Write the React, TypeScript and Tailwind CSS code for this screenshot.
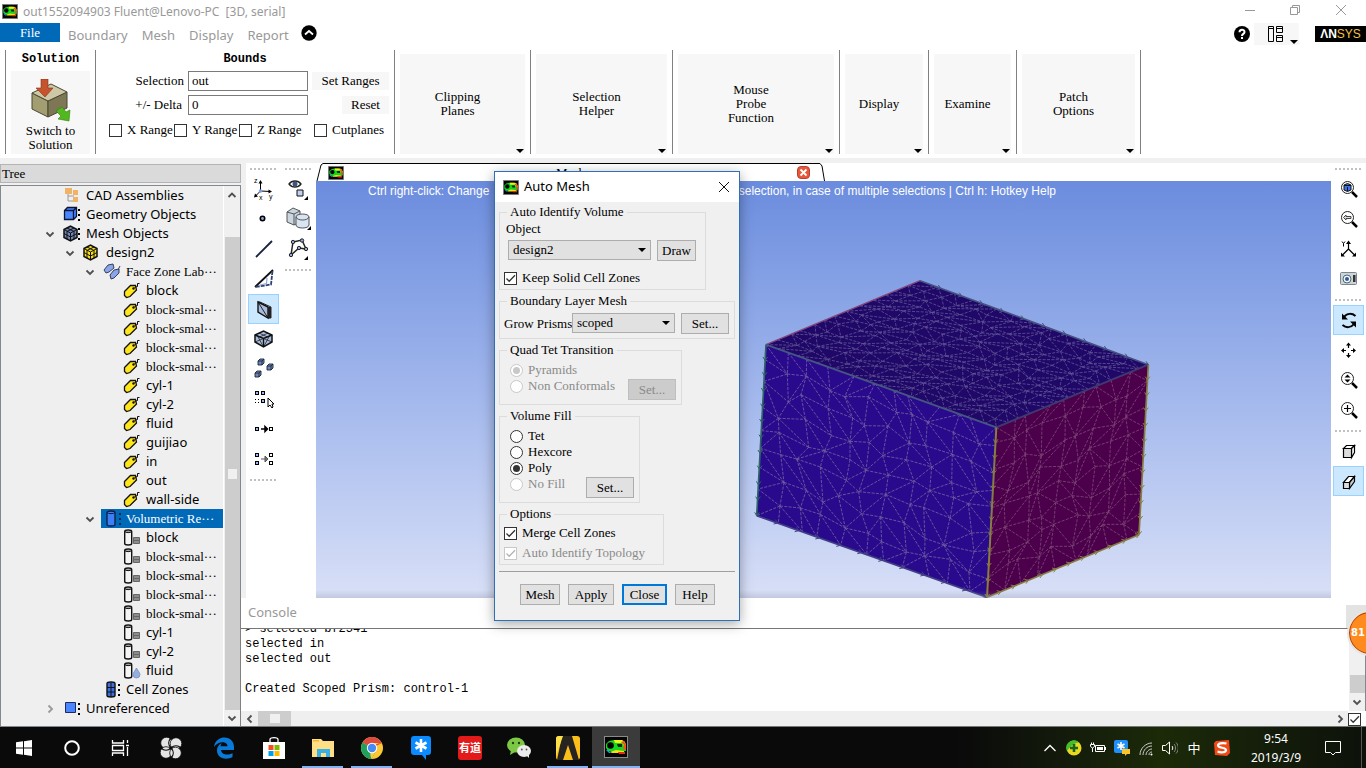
import React from 'react';

type Point = [number, number];

const sans = "font-['Noto_Sans','Open_Sans',sans-serif] text-[13px]";

/* ---------- Small shared pieces ---------- */

function FluentIcon({ className = 'w-4 h-4' }: { className?: string }) {
  return (
    <svg viewBox="0 0 24 22" preserveAspectRatio="none" className={className} aria-hidden="true">
      <rect x="0.5" y="0.5" width="23" height="21" fill="#050505" stroke="#8a8a8a" />
      <path d="M2 8l3-3 5-1h5l5 1 2 4v6l-7 1H9l-5-1-2-3z" fill="#12d822" />
      <path d="M10 4h8l3 2 1 4h-2l-2-3h-7z" fill="#f8f010" />
      <path d="M17 6l3-1 2 4v5l-3-1 1-4z" fill="#f4501a" />
      <path d="M6 16l6-2 8 1v2H8z" fill="#f8e010" />
      <path d="M14 16h7v2h-6z" fill="#ee2a10" />
      <path d="M2 14h2l3 3H5z" fill="#18a0e8" />
      <circle cx="6.500" cy="9.500" r="3.300" fill="#000" />
      <path d="M13 8h5v3h-4z" fill="#0a2a08" />
    </svg>
  );
}

function DownArrow({ className = '' }: { className?: string }) {
  return (
    <svg viewBox="0 0 8 4" className={`w-2 h-1 ${className}`} aria-hidden="true">
      <path d="M0 0h8L4 4z" fill="#000" />
    </svg>
  );
}

function Chevron({ dir, color = '#505050' }: { dir: 'up' | 'down' | 'left' | 'right'; color?: string }) {
  const paths = {
    up: 'M1.500 7L5 3.500 8.500 7',
    down: 'M1.500 3.500L5 7l3.500-3.500',
    left: 'M6.500 1.500L3 5l3.500 3.500',
    right: 'M3.500 1.500L7 5 3.500 8.500',
  };
  return (
    <svg viewBox="0 0 10 10" className="w-2.5 h-2.5 shrink-0" fill="none" stroke={color} strokeWidth="1.8" aria-hidden="true">
      <path d={paths[dir]} />
    </svg>
  );
}

function Check({ label, checked, disabled }: { label: string; checked?: boolean; disabled?: boolean }) {
  return (
    <label className={`flex items-center gap-[5px] h-[14px] whitespace-nowrap ${disabled ? 'text-[#8a8a8a]' : 'text-black'}`}>
      <span className="relative w-[13px] h-[13px] shrink-0">
        <input
          type="checkbox"
          defaultChecked={checked}
          disabled={disabled}
          aria-label={label || 'Show console'}
          className="peer block appearance-none w-[13px] h-[13px] bg-white border border-[#333] disabled:border-[#c8c8c8]"
        />
        <svg viewBox="0 0 13 13" className="absolute inset-0 hidden peer-checked:block pointer-events-none" fill="none" stroke={disabled ? '#b4b4b4' : '#333'} strokeWidth="1.3">
          <path d="M2.500 6.500L5.200 9.200 11 3.200" />
        </svg>
      </span>
      {label}
    </label>
  );
}

function Radio({ name, label, checked, disabled }: { name: string; label: string; checked?: boolean; disabled?: boolean }) {
  return (
    <label className={`flex items-center gap-[5px] h-4 whitespace-nowrap ${disabled ? 'text-[#8a8a8a]' : 'text-black'}`}>
      <span className="relative w-[13px] h-[13px]">
        <input
          type="radio"
          name={name}
          defaultChecked={checked}
          disabled={disabled}
          className="peer block appearance-none w-[13px] h-[13px] rounded-full bg-white border border-[#333] disabled:border-[#c8c8c8]"
        />
        <span className="absolute left-[3px] top-[3px] w-[7px] h-[7px] rounded-full bg-[#333] hidden peer-checked:block peer-disabled:bg-[#c8c8c8]" />
      </span>
      {label}
    </label>
  );
}

function PushButton({ children, className = '', disabled }: { children: React.ReactNode; className?: string; disabled?: boolean }) {
  return (
    <button
      disabled={disabled}
      className={`h-[21px] border text-center ${disabled ? 'bg-[#ccc] border-[#bfbfbf] text-[#8a8a8a]' : 'bg-[#e1e1e1]'} ${className}`}
    >
      {children}
    </button>
  );
}

function Select({ label, value, className }: { label: string; value: string; className: string }) {
  return (
    <span className={`relative h-5 ${className}`}>
      <select aria-label={label} className="appearance-none w-full h-5 bg-[#e1e1e1] border border-[#adadad] pl-1 leading-[14px]">
        <option>{value}</option>
      </select>
      <DownArrow className="absolute right-[5px] top-2 pointer-events-none" />
    </span>
  );
}

function Dots() {
  return (
    <div className="h-[11px] flex items-center justify-center gap-px" aria-hidden="true">
      {[0, 1, 2, 3, 4, 5, 6].map((i) => (
        <span key={i} className="w-[3px] h-0.5 bg-[#c0c0c0] border-r border-white" />
      ))}
    </div>
  );
}

/* ---------- Title bar, menu and ribbon ---------- */

function TitleBar() {
  return (
    <header className="flex items-center h-[23px] pl-0.5 pr-[19px] bg-white">
      <FluentIcon className="w-4 h-[15px]" />
      <h1 className="font-['Noto_Sans','Open_Sans',sans-serif] text-[12px] ml-[5px] text-[#999] whitespace-pre">out1552094903 Fluent@Lenovo-PC  [3D, serial]</h1>
      <div className="ml-auto flex items-center gap-[34px] pb-[3px]">
        <button aria-label="Minimize" className="w-[10px]">
          <svg viewBox="0 0 10 10" className="w-[10px]" stroke="#999" fill="none"><path d="M0 5.500h10" /></svg>
        </button>
        <button aria-label="Restore" className="w-3">
          <svg viewBox="0 0 12 12" className="w-3" stroke="#999" fill="none"><path d="M1.500 3.500h7v7h-7zM3.500 3.500v-2h7v7h-2" /></svg>
        </button>
        <button aria-label="Close window" className="w-3">
          <svg viewBox="0 0 12 12" className="w-3" stroke="#999" fill="none"><path d="M1 1l10 10M11 1L1 11" /></svg>
        </button>
      </div>
    </header>
  );
}

function MenuBar() {
  return (
    <nav className="flex items-start h-[27px] bg-white">
      <button className="w-[60px] h-[19px] bg-[#0069b8] text-white">File</button>
      <div className={`${sans} flex items-center h-[24px] ml-2 gap-[14px] text-[#999]`}>
        {['Boundary', 'Mesh', 'Display', 'Report'].map((item) => (
          <button key={item}>{item}</button>
        ))}
      </div>
      <button aria-label="Collapse ribbon" className="ml-3 mt-0.5">
        <svg viewBox="0 0 16 16" className="w-4 h-4">
          <circle cx="8" cy="8" r="7.700" fill="#000" />
          <path d="M4 9.500L8 6l4 3.500" fill="none" stroke="#fff" strokeWidth="1.800" />
        </svg>
      </button>
      <div className="ml-auto flex items-center">
        <button aria-label="Help">
          <svg viewBox="0 0 16 16" className="w-4 h-4">
            <circle cx="8" cy="8" r="8" fill="#000" />
            <path d="M5.500 6.300C5.500 3 10.500 3 10.500 6c0 2-2.500 1.800-2.500 4M8 11v2" fill="none" stroke="#fff" strokeWidth="2" />
          </svg>
        </button>
        <button aria-label="Arrange layout" className="flex items-end w-[45px] h-[22px] ml-1 bg-[#f7f7f7] pl-[14px] pb-[3px]">
          <svg viewBox="0 0 16 16" className="w-4 h-4" fill="none" stroke="#000">
            <path d="M.5.5h5v15h-5zM.5 2.500h5M8.500.5h6v6h-6zM8.500 2.500h6M8.500 9.500h6v6h-6zM8.500 11.500h6" />
          </svg>
          <DownArrow className="ml-1.5 -mb-0.5" />
        </button>
        <div className="w-[51px] h-4 ml-4 bg-black text-white font-bold font-['Liberation_Sans',sans-serif] text-[12px] leading-4 text-center">
          ΛN<span className="font-normal text-[#f5c242]">SYS</span>
        </div>
      </div>
    </nav>
  );
}

function SolutionIcon() {
  return (
    <svg viewBox="0 0 40 44" className="w-10 h-11" aria-hidden="true">
      <path d="M1 14L17 22v16L1 30z" fill="#a39d72" stroke="#4a4632" />
      <path d="M17 22l19-9v16l-19 9z" fill="#7d7755" stroke="#4a4632" />
      <path d="M1 14L20 5l16 8-19 9z" fill="#cdc8a6" stroke="#4a4632" />
      <path d="M10 0h7v9h5l-8 9-9-9h5z" fill="#c4532e" stroke="#8d2f14" strokeWidth=".6" />
      <path d="M25 32l6-4 4 5 4-2-1 11-11-2 3-3z" fill="#52b820" stroke="#2f7d0c" strokeWidth=".6" />
    </svg>
  );
}

const ribbonMenus = [
  { lines: ['Clipping', 'Planes'], width: 'w-[136px]' },
  { lines: ['Selection', 'Helper'], width: 'w-[142px]' },
  { lines: ['Mouse', 'Probe', 'Function'], width: 'w-[167px]' },
  { lines: ['Display'], width: 'w-[89px]' },
  { lines: ['Examine'], width: 'w-[88px]' },
  { lines: ['Patch', 'Options'], width: 'w-[125px] border-r' },
];

function Ribbon() {
  const title = "font-['Liberation_Mono',monospace] font-bold text-[12px] text-center h-[18px] leading-[18px]";
  return (
    <div className="flex items-stretch h-[108px] pb-1 pl-[5px] bg-white">
      <section className="w-[90px] border-l border-[#808080] px-[5px] flex flex-col">
        <h2 className={title}>Solution</h2>
        <button className="mt-[3px] flex-1 bg-[#f7f7f7] flex flex-col items-center pt-2">
          <SolutionIcon />
          <span className="mt-px">Switch to<br />Solution</span>
        </button>
      </section>

      <section className="w-[299px] border-l border-[#808080] pl-[13px] pr-[5px]">
        <h2 className={`${title} pr-2`}>Bounds</h2>
        <div className="grid grid-cols-[77px_120px_1fr] gap-x-0.5 gap-y-1 mt-[3px] items-center">
          <label htmlFor="selection" className="text-right pr-0.5">Selection</label>
          <input id="selection" defaultValue="out" className="w-full h-5 border border-[#7a7a7a] px-[3px]" />
          <button className="justify-self-end w-[77px] h-[18px] bg-[#f7f7f7]">Set Ranges</button>
          <label htmlFor="delta" className="text-right pr-1">+/- Delta</label>
          <input id="delta" defaultValue="0" className="w-full h-5 border border-[#7a7a7a] px-[3px]" />
          <button className="justify-self-end w-[47px] h-[18px] bg-[#f7f7f7]">Reset</button>
        </div>
        <div className="grid grid-cols-[65px_65px_75px_1fr] mt-2">
          <Check label="X Range" />
          <Check label="Y Range" />
          <Check label="Z Range" />
          <Check label="Cutplanes" />
        </div>
      </section>

      {ribbonMenus.map((menu) => (
        <section key={menu.lines[0]} className={`${menu.width} border-l border-[#808080] pt-1 px-[5px]`}>
          <button className="relative w-full h-full bg-[#f7f7f7] pr-[10px]">
            {menu.lines.map((line) => (
              <span key={line} className="block">{line}</span>
            ))}
            <DownArrow className="absolute right-px bottom-px" />
          </button>
        </section>
      ))}
    </div>
  );
}

/* ---------- Outline tree ---------- */

type IconKind = 'cad' | 'geometry' | 'mesh' | 'design' | 'labels' | 'tag' | 'regions' | 'solid' | 'liquid' | 'cells' | 'unref';

function TreeIcon({ kind }: { kind: IconKind }) {
  const colon = <path d="M16 4h2v2h-2zM16 9h2v2h-2zM16 14h2v2h-2z" fill="#000" />;
  const hex = (fill: string) => (
    <g fill={fill} stroke="#111">
      <path d="M2 5.500L8.500 2 15 5.500v8L8.500 17 2 13.500z" strokeWidth="1.500" />
      <path d="M2 5.500L8.500 9 15 5.500M8.500 9v8M5 7.200v8M12 7.200v8M2 9.500l6.500 3.500L15 9.500M5 4l7 3.500M12 4L5 7.500" fill="none" />
    </g>
  );
  return (
    <svg viewBox="0 0 20 19" className="w-5 h-[19px] shrink-0" aria-hidden="true">
      {kind === 'cad' && (
        <>
          <path d="M6 7v8h6M6 10h6" fill="none" stroke="#999" />
          <path d="M3 2h7v6H3zM11 4h5v5h-5zM11 11h5v5h-5z" fill="#f0b264" />
        </>
      )}
      {kind === 'geometry' && (
        <>
          <path d="M2.500 5.500l3-3h9v9l-3 3h-9zM2.500 5.500h9v9M11.500 5.500l3-3" fill="#4a86ff" stroke="#0b1430" strokeWidth="1.300" />
          {colon}
        </>
      )}
      {kind === 'mesh' && <>{hex('#7186b5')}{colon}</>}
      {kind === 'design' && hex('#f7dd1c')}
      {kind === 'labels' && (
        <g fill="#8aa6e8" stroke="#35405e">
          <path d="M2 8l4-5 5-1 1 4-5 4-3 1z" />
          <path d="M8 13l4-5 5-1v4l-5 5-3 1z" />
          <path d="M16 8l2-4" fill="none" />
        </g>
      )}
      {kind === 'tag' && (
        <>
          <path d="M2.500 10.500L8.500 4.500l5 0 1 4.500L8 15.500 4.500 16.500l-2-2z" fill="#ffe61c" stroke="#111" strokeWidth="1.300" />
          <circle cx="11.500" cy="7.500" r="1.200" fill="#111" />
          <path d="M12.500 6.500l3-1V2.500h2" fill="none" stroke="#111" />
        </>
      )}
      {kind === 'regions' && (
        <>
          <path d="M5 3.500c0-2 8-2 8 0v12c0 2-8 2-8 0z" fill="#3d80f5" stroke="#0a1c44" strokeWidth="1.300" />
          <path d="M5 3.500c1 1.500 7 1.500 8 0" fill="none" stroke="#0a1c44" />
          <path d="M17 4h2v2h-2zM17 9h2v2h-2zM17 14h2v2h-2z" fill="#072a52" />
        </>
      )}
      {(kind === 'solid' || kind === 'liquid') && (
        <>
          <path d="M2.700 3.500c0-2 7-2 7 0v12c0 2-7 2-7 0z" fill="#f4f4f4" stroke="#111" strokeWidth="1.400" />
          <path d="M2.700 3.500c1 1.500 6 1.500 7 0" fill="#555" stroke="#111" />
        </>
      )}
      {kind === 'solid' && <path d="M11.500 9.500h6v6h-6zM11.500 12.500h6" fill="#8c8c8c" stroke="#666" />}
      {kind === 'liquid' && <path d="M14.500 7c2 3.500 3.500 5 3.500 6.500a3.500 3.500 0 01-7 0C11 12 12.500 10.500 14.500 7z" fill="#94aede" stroke="#7188bd" strokeWidth=".7" />}
      {kind === 'cells' && (
        <>
          <path d="M5 3.500c0-2 8-2 8 0v12c0 2-8 2-8 0z" fill="#3c70e0" stroke="#111" strokeWidth="1.400" />
          <path d="M9 3v14M5 7.500h8M5 12h8" stroke="#111" />
          {colon}
        </>
      )}
      {kind === 'unref' && (
        <>
          <path d="M3.500 3.500h10v10h-10z" fill="#4a86ff" stroke="#1c2c60" />
          {colon}
        </>
      )}
    </svg>
  );
}

interface TreeRow {
  label: string;
  depth: number;
  icon: IconKind;
  arrow?: 'down' | 'right';
  wide?: boolean;
  selected?: boolean;
}

const small = (icon: IconKind): TreeRow => ({ label: 'block-smal···', depth: 3, icon, wide: true });

const treeRows: TreeRow[] = [
  { label: 'CAD Assemblies', depth: 0, icon: 'cad' },
  { label: 'Geometry Objects', depth: 0, icon: 'geometry' },
  { label: 'Mesh Objects', depth: 0, icon: 'mesh', arrow: 'down' },
  { label: 'design2', depth: 1, icon: 'design', arrow: 'down' },
  { label: 'Face Zone Lab···', depth: 2, icon: 'labels', arrow: 'down', wide: true },
  { label: 'block', depth: 3, icon: 'tag' },
  small('tag'),
  small('tag'),
  small('tag'),
  small('tag'),
  { label: 'cyl-1', depth: 3, icon: 'tag' },
  { label: 'cyl-2', depth: 3, icon: 'tag' },
  { label: 'fluid', depth: 3, icon: 'tag' },
  { label: 'guijiao', depth: 3, icon: 'tag' },
  { label: 'in', depth: 3, icon: 'tag' },
  { label: 'out', depth: 3, icon: 'tag' },
  { label: 'wall-side', depth: 3, icon: 'tag' },
  { label: 'Volumetric Re···', depth: 2, icon: 'regions', arrow: 'down', wide: true, selected: true },
  { label: 'block', depth: 3, icon: 'solid' },
  small('solid'),
  small('solid'),
  small('solid'),
  small('solid'),
  { label: 'cyl-1', depth: 3, icon: 'solid' },
  { label: 'cyl-2', depth: 3, icon: 'solid' },
  { label: 'fluid', depth: 3, icon: 'liquid' },
  { label: 'Cell Zones', depth: 2, icon: 'cells' },
  { label: 'Unreferenced', depth: 0, icon: 'unref', arrow: 'right' },
];

const indents = ['pl-[41px]', 'pl-[61px]', 'pl-[81px]', 'pl-[101px]'];

function TreePanel() {
  return (
    <aside className="w-[241px] shrink-0 flex flex-col bg-[#f0f0f0] pt-px">
      <h2 className="h-[19px] bg-[#dadada] border border-[#b4b4b4] leading-[18px] pl-px">Tree</h2>
      <div className="flex-1 mt-0.5 flex border border-[#828790] bg-[#efefef]">
        <ul className="flex-1">
          {treeRows.map((row, i) => (
            <li key={i} className={`flex items-center h-[19px] ${indents[row.depth]}`}>
              <span className="w-4 mr-[3px] flex justify-center">
                {row.arrow && <Chevron dir={row.arrow} color={row.arrow === 'right' ? '#999' : '#505050'} />}
              </span>
              <span className={`flex-1 flex items-center gap-1 pl-px h-[19px] whitespace-nowrap ${row.selected ? 'bg-[#0069b8] text-white' : ''}`}>
                <TreeIcon kind={row.icon} />
                <span className={row.wide ? 'pt-px' : `${sans} pb-0.5`}>{row.label}</span>
              </span>
            </li>
          ))}
        </ul>
        <div className="w-[17px] flex flex-col items-center border-l border-white bg-[#f0f0f0]">
          <span className="h-[51px] pt-1"><Chevron dir="up" /></span>
          <span className="flex-1 w-[15px] bg-[#cdcdcd] flex items-center justify-center">
            <span className="w-[9px] h-[10px] bg-[#f0f0f0]" />
          </span>
          <span className="h-4 pt-[3px]"><Chevron dir="down" /></span>
        </div>
      </div>
    </aside>
  );
}

/* ---------- Tool strips ---------- */

interface Tool {
  name: string;
  art: React.ReactNode;
  active?: boolean;
}

const corner = <path d="M20 21v-4l-4 4z" fill="#000" />;
const miniCube = (x: number, y: number) => (
  <g transform={`translate(${x} ${y})`} stroke="#1c2436" strokeWidth=".9">
    <path d="M0 2l2-2h4v4L4 6H0z" fill="#6f86b8" />
    <path d="M0 2h4v4M4 2l2-2" fill="none" />
  </g>
);
const square = (x: number, y: number, fill = '#9db8f2') => <rect x={x} y={y} width="3" height="3" fill={fill} stroke="#000" />;
const lens = (
  <>
    <circle cx="9.500" cy="8.500" r="6" fill="#fff" stroke="#222" />
    <path d="M14 13l5 5" stroke="#000" strokeWidth="2.500" />
  </>
);

const pickTools: Tool[] = [
  {
    name: 'Axes',
    art: (
      <>
        <path d="M7.500 3v9l10 .5M7.500 12l-5 5" fill="none" stroke="#000" />
        <path d="M7.500 1L5.500 4.500h4zM19 12.500l-3.500-2v4zM1 18.500l1-4 3 3z" />
        <text x="1" y="4" fontSize="7" fontFamily="Liberation Sans">z</text>
        <text x="16" y="20" fontSize="7" fontFamily="Liberation Sans">y</text>
        <text x="6" y="21" fontSize="7" fontFamily="Liberation Sans">x</text>
        <circle cx="7.500" cy="12" r="1.800" fill="#7f9be0" />
      </>
    ),
  },
  { name: 'Select node', art: <circle cx="9.500" cy="9.500" r="2.200" fill="#8fa9dd" stroke="#000" strokeWidth="1.600" /> },
  { name: 'Select edge', art: <path d="M3 18L19 2" stroke="#18223c" strokeWidth="1.800" /> },
  {
    name: 'Select face',
    art: (
      <>
        <path d="M2 18L20 1" stroke="#111" strokeWidth="1.800" />
        <path d="M19.500 2l-1.500 13.500L2 18" fill="none" stroke="#2e4270" strokeWidth="1.800" strokeDasharray="4 1" />
        <path d="M14 9l-.5 5.500L7 16" fill="none" stroke="#8fa9dd" strokeWidth="1.200" />
      </>
    ),
  },
  {
    name: 'Select zone',
    active: true,
    art: (
      <>
        <path d="M5 3l10 5v11L5 13z" fill="#a9bbdc" stroke="#111" strokeWidth="1.400" />
        <path d="M5 3l10 16M5 3h2l11 5v11l-3 0" fill="none" stroke="#111" strokeWidth=".9" />
        <path d="M15 8l3 0v11h-3z" fill="#222" />
      </>
    ),
  },
  {
    name: 'Select object',
    art: (
      <>
        <path d="M2 6l8.500-4L19 6v7l-8.500 5L2 13z" fill="#a9bbdc" stroke="#111" strokeWidth="1.500" />
        <path d="M2 6l8.500 3.500L19 6M10.500 9.500V18" fill="none" stroke="#111" strokeWidth="1.400" />
        <path d="M2 13l8.500-3.500L19 13M6 4l8.500 4M15 4L6.500 8M4 6l6.500 12M17 6l-6.500 12" fill="none" stroke="#111" strokeWidth=".7" />
      </>
    ),
  },
  { name: 'Select bodies', art: <>{miniCube(5, 0)}{miniCube(14, 5)}{miniCube(2, 12)}</> },
  {
    name: 'Box select',
    art: (
      <>
        {square(2.500, 2.500)}
        {square(8.500, 2.500)}
        {square(8.500, 10.500)}
        <path d="M2 10h1v1H2zM5 10h1v1H5zM2 13h1v1H2zM5 13h1v1H5z" />
        <path d="M15 9v9l2-2 2 3 1-1-1-3h2z" fill="#fff" stroke="#000" />
      </>
    ),
  },
  {
    name: 'Extend selection',
    art: (
      <>
        {square(2.500, 8.500)}
        <path d="M8 10h4M12 7.500L14.500 10 12 12.500z" fill="#000" stroke="#000" strokeWidth="1.500" />
        {square(16.500, 8.500, '#fff')}
      </>
    ),
  },
  {
    name: 'Convert selection',
    art: (
      <>
        {square(2.500, 4.500)}
        {square(2.500, 12.500)}
        <path d="M8 10h4M12 7l3 3-3 3z" fill="#777" stroke="#555" />
        {square(16.500, 4.500, '#fff')}
        {square(16.500, 12.500, '#fff')}
      </>
    ),
  },
];

const showTools: Tool[] = [
  {
    name: 'Visibility',
    art: (
      <>
        <path d="M1 5c3-4 9-4 12 0-3 4-9 4-12 0z" fill="#fff" stroke="#222" strokeWidth="1.300" />
        <circle cx="7" cy="5" r="2.500" fill="#3c5578" />
        <path d="M9 11h6v6H9z" fill="#c0d2f2" stroke="#111" />
        {corner}
      </>
    ),
  },
  {
    name: 'Shading',
    art: (
      <>
        <path d="M-1 3l6-4 7 3v11l-6 3-7-3z" fill="#ccd6e0" stroke="#555" />
        <path d="M-1 3l7 2 6-3M6 5v11" fill="none" stroke="#555" />
        <path d="M8 8c0-4 13-4 13 0v8c0 4-13 4-13 0z" fill="#d8e4f2" stroke="#555" />
        <path d="M8 8c1 4 12 4 13 0" fill="none" stroke="#555" />
        <path d="M23 21v-4l-4 4z" />
      </>
    ),
  },
  {
    name: 'Mesh edges',
    art: (
      <>
        <path d="M5 3l9-2 4 9-7-1-8 7z" fill="none" stroke="#222" strokeWidth="1.500" />
        <g fill="#8ea6d2" stroke="#222">
          <circle cx="5" cy="3" r="1.700" />
          <circle cx="14" cy="1.500" r="1.700" />
          <circle cx="18" cy="10" r="1.700" />
          <circle cx="11" cy="9" r="1.700" />
          <circle cx="3" cy="16" r="1.700" />
        </g>
        {corner}
      </>
    ),
  },
];

const viewTools: Tool[][] = [
  [
    { name: 'Fit to window', art: <>{lens}<path d="M6 6l3.500-1.500L13 6v5l-3.500 1.500L6 11z" fill="#3c74e8" stroke="#111" /><path d="M9.500 8v4M6 6.500h7" stroke="#111" /></> },
    { name: 'Last view', art: <>{lens}<path d="M5.500 8.500L8 6v1.500h5v2H8V11z" fill="#ddd" stroke="#444" /></> },
    {
      name: 'Set view',
      art: (
        <>
          <path d="M10.500 5v5M10.500 10l-6 6M10.500 10l6 6" stroke="#000" strokeWidth="1.200" fill="none" />
          <path d="M10.500 1.500L8 5h5zM3 17.500v-4l4 4zM18 17.500v-4l-4 4z" />
          <path d="M4 2.500l1.500 2L7 2.500M5.500 4.500v3" stroke="#000" fill="none" />
        </>
      ),
    },
    {
      name: 'Save picture',
      art: (
        <>
          <rect x="2.500" y="3.500" width="16" height="12" rx="1" fill="#cbd5da" stroke="#7b878d" />
          <circle cx="9" cy="10" r="4" fill="#f3f7fa" stroke="#56646e" />
          <circle cx="9" cy="10" r="2" fill="#2b5c9c" />
          <path d="M15 6h2.500v7H15z" fill="#333" />
        </>
      ),
    },
  ],
  [
    {
      name: 'Rotate view',
      active: true,
      art: (
        <>
          <path d="M6 7c3-4 8-4 11.500-1M16 14c-3 4-8 4-11.500 1" fill="none" stroke="#000" strokeWidth="2" />
          <path d="M4 3.500V9.500h6zM18 17.500v-6h-6z" />
        </>
      ),
    },
    {
      name: 'Pan',
      art: (
        <>
          <path d="M10.500 4v4M10.500 13v3M5 10.500h3M13 10.500h3" stroke="#000" strokeWidth="1.200" />
          <path d="M10.500 2.500L8 5.500h5zM10.500 18L8 15h5zM3 10.500L6 8v5zM18 10.500L15 8v5z" />
        </>
      ),
    },
    { name: 'Zoom in/out', art: <>{lens}<path d="M9.500 4.500l-3 3h6zM9.500 12.500l-3-3h6z" /></> },
    { name: 'Zoom to area', art: <>{lens}<path d="M9.500 5v7M6 8.500h7" stroke="#000" strokeWidth="1.200" /></> },
  ],
  [
    {
      name: 'Orthographic',
      art: (
        <g stroke="#000" strokeWidth="1.200">
          <path d="M5.500 7.500l3-3h8l-3 3z" fill="#fff" />
          <path d="M13.500 7.500l3-3v7l-3 5z" fill="#fff" />
          <path d="M5.500 7.500h8v9h-8z" fill="#ddd" />
        </g>
      ),
    },
    {
      name: 'Perspective',
      active: true,
      art: (
        <g stroke="#000" strokeWidth="1.200">
          <path d="M5.500 11.500l5-6h6l-5 6z" fill="#fff" />
          <path d="M11.500 11.500l5-6v5l-5 7z" fill="#ccc" />
          <path d="M5.500 11.500h6v6h-6z" fill="#ddd" />
        </g>
      ),
    },
  ],
];

function ToolButton({ tool }: { tool: Tool }) {
  return (
    <button
      aria-label={tool.name}
      className={`w-[31px] h-[30px] flex items-center justify-center border ${tool.active ? 'bg-[#cce8ff] border-[#99d1ff]' : 'border-transparent'}`}
    >
      <svg viewBox="0 0 21 21" className="w-[21px] h-[21px] overflow-visible" aria-hidden="true">
        {tool.art}
      </svg>
    </button>
  );
}

function ToolStrip({ groups, endDots }: { groups: Tool[][]; endDots?: boolean }) {
  return (
    <div className="w-[35px] shrink-0 flex flex-col items-center bg-white">
      {groups.map((group, i) => (
        <React.Fragment key={i}>
          <Dots />
          {group.map((tool) => (
            <ToolButton key={tool.name} tool={tool} />
          ))}
        </React.Fragment>
      ))}
      {endDots && <Dots />}
    </div>
  );
}

/* ---------- Graphics window ---------- */

const A: Point = [540, 62];
const L: Point = [78, 254];
const R: Point = [1225, 314];
const F: Point = [769, 502];
const BL: Point = [50, 767];
const BF: Point = [741, 1012];
const BR: Point = [1197, 824];

function random(seed: number) {
  let s = seed;
  return () => {
    s = (s * 16807) % 2147483647;
    return s / 2147483647;
  };
}

// Triangulates a quad with jittered interior nodes and returns its edges as a path.
function triangulate([p, q, r, s]: Point[], nu: number, nv: number, seed: number) {
  const rnd = random(seed);
  const at = (u: number, v: number): Point => [
    (1 - u) * (1 - v) * p[0] + u * (1 - v) * q[0] + u * v * r[0] + (1 - u) * v * s[0],
    (1 - u) * (1 - v) * p[1] + u * (1 - v) * q[1] + u * v * r[1] + (1 - u) * v * s[1],
  ];
  const nodes: string[][] = [];
  for (let i = 0; i <= nu; i++) {
    nodes.push([]);
    for (let j = 0; j <= nv; j++) {
      const du = i > 0 && i < nu ? (rnd() - 0.5) * 0.6 : 0;
      const dv = j > 0 && j < nv ? (rnd() - 0.5) * 0.6 : 0;
      const [x, y] = at((i + du) / nu, (j + dv) / nv);
      nodes[i].push(`${Math.round(x)} ${Math.round(y)}`);
    }
  }
  let d = '';
  for (let i = 0; i < nu; i++) {
    for (let j = 0; j < nv; j++) {
      if (j > 0) d += `M${nodes[i][j]}L${nodes[i + 1][j]}`;
      if (i > 0) d += `M${nodes[i][j]}L${nodes[i][j + 1]}`;
      d += rnd() > 0.45
        ? `M${nodes[i][j]}L${nodes[i + 1][j + 1]}`
        : `M${nodes[i + 1][j]}L${nodes[i][j + 1]}`;
    }
  }
  return d;
}

const faces = [
  { pts: [L, A, R, F], fill: '#1f0868', line: '#5f5394', nu: 13, nv: 14, seed: 71 },
  { pts: [L, F, BF, BL], fill: '#2a0a8c', line: '#6f62a0', nu: 11, nv: 8, seed: 23 },
  { pts: [F, R, BR, BF], fill: '#4c004c', line: '#7c4874', nu: 9, nv: 8, seed: 57 },
];

const edges: { from: Point; to: Point; color: string; width: number; plain?: boolean }[] = [
  { from: L, to: A, color: '#83457c', width: 4, plain: true },
  { from: A, to: R, color: '#465283', width: 5 },
  { from: L, to: F, color: '#455684', width: 6, plain: true },
  { from: F, to: R, color: '#403871', width: 6, plain: true },
  { from: L, to: BL, color: '#2e6468', width: 5 },
  { from: BL, to: BF, color: '#413f85', width: 5 },
  { from: BF, to: BR, color: '#877d42', width: 5 },
  { from: R, to: BR, color: '#877d42', width: 5 },
  { from: F, to: BF, color: '#877d42', width: 6 },
];

// Small arrow heads marking the nodes along a feature edge.
function barbs(from: Point, to: Point) {
  let d = '';
  const n = 11;
  const len = Math.hypot(to[0] - from[0], to[1] - from[1]);
  const ux = (to[0] - from[0]) / len;
  const uy = (to[1] - from[1]) / len;
  for (let i = 1; i <= n; i++) {
    const x = from[0] + ((to[0] - from[0]) * i) / n;
    const y = from[1] + ((to[1] - from[1]) * i) / n;
    d += `M${Math.round(x)} ${Math.round(y)}l${Math.round(-ux * 10 - uy * 7)} ${Math.round(-uy * 10 + ux * 7)}`;
    d += `M${Math.round(x)} ${Math.round(y)}l${Math.round(-ux * 10 + uy * 7)} ${Math.round(-uy * 10 - ux * 7)}`;
  }
  return d;
}

function MeshModel() {
  return (
    <svg viewBox="0 0 1290 1014" className="absolute left-[424px] top-[79px] w-[430px] h-[338px]" role="img" aria-label="Surface mesh of design2">
      {faces.map((face) => (
        <g key={face.seed}>
          <polygon points={face.pts.join(' ')} fill={face.fill} />
          <path d={triangulate(face.pts, face.nu, face.nv, face.seed)} fill="none" stroke={face.line} strokeWidth="2.500" strokeDasharray="9 4" />
        </g>
      ))}
      {edges.map((e, i) => (
        <g key={i} stroke={e.color} fill="none">
          <path d={`M${e.from}L${e.to}`} strokeWidth={e.width} />
          {!e.plain && <path d={barbs(e.from, e.to)} strokeWidth="3" />}
        </g>
      ))}
    </svg>
  );
}

function GraphicsWindow() {
  return (
    <main className="flex-1 min-w-0 flex flex-col bg-white">
      <div className="flex h-[18px]">
        <svg viewBox="0 0 7 18" className="w-[7px] h-[18px]" fill="none" stroke="#000"><path d="M1 18L5 2l2-1.500" /></svg>
        <div className="w-[497px] flex items-center border-t border-black pl-[5px] pr-[10px]">
          <FluentIcon className="w-4 h-3.5" />
          <span className="flex-1 text-center">Mesh</span>
          <button aria-label="Close tab" className="bg-[#e8573c] border border-[#b8432c] rounded-sm w-[13px] h-[13px]">
            <svg viewBox="0 0 11 11" className="w-[11px] h-[11px]" stroke="#fff" strokeWidth="1.800"><path d="M2.500 2.500l6 6M8.500 2.500l-6 6" /></svg>
          </button>
        </div>
        <svg viewBox="0 0 5 18" className="w-[5px] h-[18px]" fill="none" stroke="#000"><path d="M0 .5L2 3l2.500 15" /></svg>
      </div>
      <div className="relative flex-1 overflow-hidden bg-linear-to-b from-[#6b8cde] to-[#d9e0f7]">
        <p className="flex justify-between w-[688px] ml-[52px] mt-0.5 text-white font-['Liberation_Sans',sans-serif] text-[12px] leading-4 whitespace-nowrap">
          <span>Ctrl right-click: Change</span>
          <span>selection, in case of multiple selections | Ctrl h: Hotkey Help</span>
        </p>
        <MeshModel />
        <div className="absolute inset-x-0 bottom-0 h-2 bg-linear-to-b from-transparent to-[#8890a8]/30" />
      </div>
    </main>
  );
}

/* ---------- Console ---------- */

function ConsolePanel() {
  return (
    <section className="relative h-[129px] shrink-0 flex flex-col bg-white -ml-px border-l border-[#808080]">
      <div className="flex justify-between h-[31px] border-b border-[#777]">
        <h2 className={`${sans} text-[#999] leading-[28px] pl-[7px]`}>Console</h2>
        <span className="w-5 mt-[7px] bg-[#e3e3e3]" />
      </div>
      <div className="flex flex-1 min-h-0">
        <div className="flex-1 flex flex-col justify-end overflow-hidden pl-1 pb-[14px] font-['Liberation_Mono',monospace] text-[12px] leading-[15px] whitespace-pre">
          <p>&gt; selected bf2541</p>
          <p>selected in</p>
          <p>selected out</p>
          <p> </p>
          <p>Created Scoped Prism: control-1</p>
        </div>
        <div className="w-[17px] bg-[#f0f0f0] border-r border-[#828790] flex flex-col items-center justify-end">
          <span className="w-[15px] h-[18px] bg-[#cdcdcd]" />
          <span className="h-[18px] pt-1"><Chevron dir="down" /></span>
        </div>
      </div>
      <div className="flex items-center h-4 border-b border-[#777] bg-[#efefef]">
        <span className="w-[17px] flex justify-center"><Chevron dir="left" /></span>
        <span className="w-[33px] h-full bg-[#cdcdcd] flex items-center justify-center">
          <span className="w-[10px] h-[9px] bg-[#f0f0f0]" />
        </span>
        <span className="ml-auto mr-[3px]"><Chevron dir="right" /></span>
        <span className="w-[18px] h-full bg-white pt-px"><Check label="" checked /></span>
      </div>
      <div className="absolute right-0 top-3 w-[19px] h-[46px] overflow-hidden">
        <div className="w-[46px] h-[46px] rounded-full bg-[#ff8a1e] border-2 border-[#e6e6e6] ring-1 ring-inset ring-[#a8440c] text-white font-bold font-['DejaVu_Sans',sans-serif] text-[10px] leading-[42px] pl-0.5">81</div>
      </div>
    </section>
  );
}

/* ---------- Auto Mesh dialog ---------- */

function Group({ title, className, children }: { title: string; className: string; children: React.ReactNode }) {
  return (
    <fieldset className={`border border-[#dcdcdc] ${className}`}>
      <legend className="ml-[7px] px-[3px] h-[14px] leading-[14px]">{title}</legend>
      {children}
    </fieldset>
  );
}

function AutoMeshDialog() {
  return (
    <div role="dialog" aria-label="Auto Mesh" className="absolute left-[494px] top-[171px] w-[246px] bg-[#f0f0f0] border border-[#2e70b8] shadow-[0_3px_12px_rgba(0,0,0,0.35)]">
      <div className="flex items-center h-[30px] pl-2 pr-[9px] bg-white">
        <FluentIcon className="w-4 h-[15px]" />
        <h2 className={`${sans} ml-[5px] pb-0.5`}>Auto Mesh</h2>
        <button aria-label="Close dialog" className="ml-auto">
          <svg viewBox="0 0 12 12" className="w-3 h-3" stroke="#111" fill="none"><path d="M1 1l10 10M11 1L1 11" /></svg>
        </button>
      </div>

      <form className="flex flex-col items-start gap-1 px-1 pt-[3px] pb-[15px]" onSubmit={(e) => e.preventDefault()}>
        <Group title="Auto Identify Volume" className="w-[207px]">
          <div className="pt-[3px] pb-1 pl-1">
            <p className="pl-0.5">Object</p>
            <div className="flex gap-1.5 mt-1 pl-1">
              <Select label="Object" value="design2" className="w-[143px]" />
              <PushButton className="w-[39px] border-[#adadad]">Draw</PushButton>
            </div>
            <div className="mt-[10px]"><Check label="Keep Solid Cell Zones" checked /></div>
          </div>
        </Group>

        <Group title="Boundary Layer Mesh" className="w-[236px]">
          <div className="flex items-center justify-between pt-[5px] pb-1 pl-1 pr-[5px]">
            <span className="w-[68px] whitespace-nowrap">Grow Prisms</span>
            <div className="flex gap-1.5">
              <Select label="Grow Prisms" value="scoped" className="w-[103px]" />
              <PushButton className="w-12 border-[#adadad]">Set...</PushButton>
            </div>
          </div>
        </Group>

        <Group title="Quad Tet Transition" className="w-[183px]">
          <div className="flex items-end justify-between pt-[5px] pb-1 pl-[10px] pr-[5px]">
            <div className="pb-[6px]">
              <Radio name="transition" label="Pyramids" checked disabled />
              <Radio name="transition" label="Non Conformals" disabled />
            </div>
            <PushButton disabled className="w-12">Set...</PushButton>
          </div>
        </Group>

        <Group title="Volume Fill" className="w-[141px]">
          <div className="flex items-end justify-between pt-[5px] pb-1 pl-[10px] pr-[5px]">
            <div className="pb-[6px]">
              <Radio name="fill" label="Tet" />
              <Radio name="fill" label="Hexcore" />
              <Radio name="fill" label="Poly" checked />
              <Radio name="fill" label="No Fill" disabled />
            </div>
            <PushButton className="w-12 border-[#adadad]">Set...</PushButton>
          </div>
        </Group>

        <Group title="Options" className="w-[165px]">
          <div className="flex flex-col gap-1.5 pt-[5px] pb-1 pl-1">
            <Check label="Merge Cell Zones" checked />
            <Check label="Auto Identify Topology" checked disabled />
          </div>
        </Group>

        <hr className="w-full mt-0.5 border-t border-[#a0a0a0]" />
        <div className="flex gap-2 mt-2 pl-[21px]">
          <PushButton className="w-10 border-[#adadad]">Mesh</PushButton>
          <PushButton className="w-[46px] border-[#adadad]">Apply</PushButton>
          <PushButton className="w-[45px] border-2 border-[#0078d7]">Close</PushButton>
          <PushButton className="w-10 border-[#adadad]">Help</PushButton>
        </div>
      </form>
    </div>
  );
}

/* ---------- Windows taskbar ---------- */

const taskIcons = [
  {
    name: 'Start',
    cell: 'w-12',
    art: <path d="M4 6.300L11 5.300v6.200H4zM12 5.200l8-1.200v7.500h-8zM4 12.500h7v6.200l-7-1zM12 12.500h8V20l-8-1.200z" fill="#fff" />,
  },
  { name: 'Cortana', cell: 'w-12', art: <circle cx="12" cy="12" r="6.800" fill="none" stroke="#fff" strokeWidth="2" /> },
  {
    name: 'Task view',
    cell: 'w-12',
    art: <path d="M4.500 4v3h11V4M4.500 20v-3h11v3M4.500 9.500h11v5h-11zM19.500 4v3M19.500 11v9M18 9.500h3" fill="none" stroke="#fff" strokeWidth="1.300" />,
  },
  {
    name: 'Sogou assistant',
    cell: 'w-[54px]',
    art: (
      <g fill="#e4e4e4" stroke="#0a0a0a" strokeWidth=".8">
        <circle cx="7.500" cy="7" r="5.800" />
        <circle cx="17" cy="7.500" r="5.800" />
        <circle cx="7" cy="16.500" r="5.800" />
        <circle cx="16.500" cy="17" r="5.800" />
        <path d="M12 2c-3 3-3 7 0 10M22 12c-3-3-7-3-10 0M12 22c3-3 3-7 0-10M2 12c3 3 7 3 10 0" fill="none" strokeWidth="1.200" />
      </g>
    ),
  },
  {
    name: 'Edge',
    cell: 'w-[51px]',
    art: <path d="M2 11C3 4 8 1.500 12.500 1.500 18 1.500 22 5.500 22 11v3H9c.3 5 7.500 5.800 11.500 3v4c-6 3.500-15.500 1.500-15.500-6.500 0-4 2.500-6.500 5-7.500-1 1-1.300 2-1.400 3.200h6.900C15.500 5 6 4.500 2 11z" fill="#0a7ad8" />,
  },
  {
    name: 'Store',
    cell: 'w-[49px]',
    art: (
      <>
        <path d="M1 6h22v17H1z" fill="#fff" />
        <path d="M8 6V3.500C8 1 16 1 16 3.500V6" fill="none" stroke="#fff" strokeWidth="1.300" />
        <path d="M6.500 9h5v5h-5z" fill="#f04e23" />
        <path d="M12.500 9h5v5h-5z" fill="#7fb900" />
        <path d="M6.500 15h5v5h-5z" fill="#009fea" />
        <path d="M12.500 15h5v5h-5z" fill="#ffb800" />
      </>
    ),
  },
  {
    name: 'File Explorer',
    cell: 'w-[49px]',
    open: true,
    art: (
      <>
        <path d="M1 3h9l2 2h11v16H1z" fill="#ffdf85" />
        <path d="M2 4h6v1.500H2z" fill="#f2b632" />
        <path d="M6 13h13v8h-4v-4h-5v4H6z" fill="#38b0e4" />
      </>
    ),
  },
  {
    name: 'Chrome',
    cell: 'w-[49px]',
    open: true,
    art: (
      <>
        <circle cx="12" cy="12" r="11" fill="#fcc934" />
        <path d="M12 12L2.500 6.500A11 11 0 0121.500 6.500L22 7z" fill="#dd4b3e" />
        <path d="M2.500 6.500A11 11 0 0011.500 23L16 15 12 12z" fill="#1fa15d" />
        <path d="M12 7h9.700A11 11 0 0011.500 23L17 13z" fill="#fccd3c" />
        <circle cx="12" cy="12" r="5.200" fill="#fff" />
        <circle cx="12" cy="12" r="4.200" fill="#4a8af4" />
      </>
    ),
  },
  {
    name: 'Messenger',
    cell: 'w-[49px]',
    art: (
      <>
        <path d="M5 0h14a3 3 0 013 3v13a3 3 0 01-3 3h-2v5l-4-5H5a3 3 0 01-3-3V3a3 3 0 013-3z" fill="#0a8bff" />
        <path d="M12 3v13M6.500 6.500l11 6M17.500 6.500l-11 6" stroke="#fff" strokeWidth="2.600" />
      </>
    ),
  },
  {
    name: 'Youdao',
    cell: 'w-[49px]',
    art: (
      <>
        <rect width="24" height="24" rx="3" fill="#e21a1a" />
        <text x="1" y="16" fontSize="11" fontWeight="bold" fill="#fff" fontFamily="Noto Sans CJK SC">有道</text>
      </>
    ),
  },
  {
    name: 'WeChat',
    cell: 'w-[49px]',
    art: (
      <>
        <ellipse cx="9" cy="9" rx="9" ry="7.500" fill="#7cc845" />
        <path d="M4 14l-1 5 5-3z" fill="#7cc845" />
        <circle cx="6" cy="7" r="1.200" fill="#20401a" />
        <circle cx="12" cy="7" r="1.200" fill="#20401a" />
        <ellipse cx="17" cy="15" rx="7" ry="6" fill="#ececec" />
        <path d="M19 19l3 3v-4z" fill="#ececec" />
        <circle cx="14.800" cy="13.500" r=".9" fill="#555" />
        <circle cx="19.500" cy="13.500" r=".9" fill="#555" />
      </>
    ),
  },
  {
    name: 'ANSYS Workbench',
    cell: 'w-[49px]',
    open: true,
    art: (
      <>
        <rect width="24" height="24" rx="3" fill="#fcbf1a" />
        <path d="M6 0h10l7 24h-6l-5-15-5 15H1z" fill="#262320" />
        <path d="M0 3a3 3 0 013-3h4L0 20z" fill="#fce04a" />
      </>
    ),
  },
];

function TrayIcon({ label, children }: { label: string; children: React.ReactNode }) {
  return (
    <button aria-label={label} className="w-6 flex justify-center">
      <svg viewBox="0 0 16 16" className="w-4 h-4" fill="none" stroke="#fff">{children}</svg>
    </button>
  );
}

function Taskbar() {
  return (
    <footer className="flex items-stretch h-[41px] shrink-0 bg-linear-to-r from-[#0a0a0a] from-70% via-[#1c2a08] via-85% to-[#0d120a] text-white">
      {taskIcons.map((item) => (
        <button key={item.name} aria-label={item.name} className={`relative flex items-center justify-center ${item.cell}`}>
          <svg viewBox="0 0 24 24" className="w-6 h-6 overflow-visible">{item.art}</svg>
          {item.open && <span className="absolute bottom-0 inset-x-1 h-0.5 bg-[#7eb4f5]" />}
        </button>
      ))}
      <button aria-label="Fluent" className="w-12 flex items-center justify-center bg-[#3b3b3b] border-b-2 border-[#7eb4f5]">
        <FluentIcon className="w-6 h-[22px]" />
      </button>

      <div className="ml-auto flex items-center">
        <TrayIcon label="Show hidden icons"><path d="M2.500 11L8 5.500l5.500 5.500" strokeWidth="1.300" /></TrayIcon>
        <TrayIcon label="Security">
          <circle cx="8" cy="8" r="7.500" fill="#e8d820" stroke="none" />
          <path d="M1 11A7.500 7.500 0 0113 2.500C9 3 4 6 1 11z" fill="#3fc02c" stroke="none" />
          <path d="M8 4v8M4 8h8" stroke="#17641c" strokeWidth="2.600" />
        </TrayIcon>
        <TrayIcon label="Battery">
          <path d="M5.500 5.500h9v6h-9z" />
          <path d="M7 7h6v3H7z" fill="#fff" stroke="none" />
          <path d="M15.500 7v3M.5 4.500h4v2l-2 1.500-2-1.500zM1.500 2.500v2M3.500 2.500v2M2.500 8v4" />
        </TrayIcon>
        <TrayIcon label="Messages">
          <rect x="0" y="0" width="14" height="13" rx="2" fill="#1e90f8" stroke="none" />
          <path d="M7 2v8M3.500 4l7 4M10.500 4l-7 4" strokeWidth="1.600" />
          <path d="M8 9h8v5h-3l-2 2v-2H8z" fill="#fbc32c" stroke="none" />
        </TrayIcon>
        <TrayIcon label="Network">
          <path d="M2 15C2 8 8 3 14 3M5 15c0-5 4-9 9-9M8 15c0-3 3-6 6-6M11 15c0-2 1-3 3-3" stroke="#ccc" />
          <circle cx="13.500" cy="14.500" r="1" fill="#fff" stroke="none" />
        </TrayIcon>
        <TrayIcon label="Volume">
          <path d="M.5 5.500h3l4-3.500v12l-4-3.500h-3z" />
          <path d="M10 6c1 1 1 3 0 4" />
          <path d="M12 4c2 2 2 6 0 8M14 2.500c3 3 3 8 0 11" stroke="#888" />
        </TrayIcon>
        <span className="w-6 text-center font-['Noto_Sans_CJK_SC',sans-serif] text-[13px]">中</span>
        <button aria-label="Sogou input" className="w-8 flex justify-center">
          <svg viewBox="0 0 16 16" className="w-4 h-4">
            <path d="M2 1l13-1 1 13-3 3-12-1L0 3z" fill="#f24a16" />
            <path d="M12.500 3.500C8 2.500 4 3.500 4 5.500c0 3 8 1.500 8 4.500 0 2.500-5 3-8.500 1.500" fill="none" stroke="#fff" strokeWidth="2.200" />
          </svg>
        </button>
        <div className="w-[76px] text-center font-['Noto_Sans','Open_Sans',sans-serif] text-[12px] leading-[19px]">
          <p>9:54</p>
          <p>2019/3/9</p>
        </div>
        <button aria-label="Notifications" className="w-[38px] flex justify-center">
          <svg viewBox="0 0 16 16" className="w-4 h-4" fill="none" stroke="#fff"><path d="M.5 1.500h15v11h-5L8 15l-2.500-2.500h-5z" /></svg>
        </button>
        <span className="w-[14px] h-full flex justify-end pr-1"><span className="w-px bg-[#555]" /></span>
      </div>
    </footer>
  );
}

function App() {
  return (
    <div className="relative min-h-screen flex flex-col overflow-hidden bg-[#f0f0f0] text-black font-['Liberation_Serif',serif] text-[13px] leading-[14px]">
      <TitleBar />
      <MenuBar />
      <Ribbon />
      <div className="flex-1 flex pt-[5px]">
        <TreePanel />
        <div className="flex-1 min-w-0 flex flex-col">
          <div className="flex-1 flex pl-[5px]">
            <ToolStrip groups={[pickTools]} endDots />
            <ToolStrip groups={[showTools]} endDots />
            <GraphicsWindow />
            <ToolStrip groups={viewTools} />
          </div>
          <ConsolePanel />
        </div>
      </div>
      <Taskbar />
      <AutoMeshDialog />
    </div>
  );
}

export default App;
